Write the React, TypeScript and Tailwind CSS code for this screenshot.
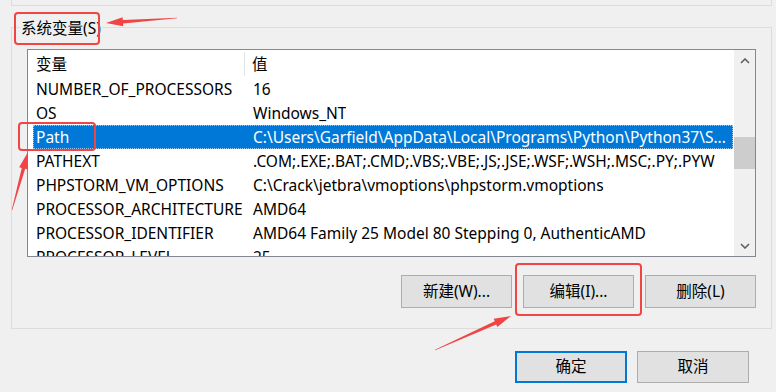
import React from "react";

const rows: [string, string][] = [
  ["NUMBER_OF_PROCESSORS", "16"],
  ["OS", "Windows_NT"],
  ["Path", "C:\\Users\\Garfield\\AppData\\Local\\Programs\\Python\\Python37\\S..."],
  ["PATHEXT", ".COM;.EXE;.BAT;.CMD;.VBS;.VBE;.JS;.JSE;.WSF;.WSH;.MSC;.PY;.PYW"],
  ["PHPSTORM_VM_OPTIONS", "C:\\Crack\\jetbra\\vmoptions\\phpstorm.vmoptions"],
  ["PROCESSOR_ARCHITECTURE", "AMD64"],
  ["PROCESSOR_IDENTIFIER", "AMD64 Family 25 Model 80 Stepping 0, AuthenticAMD"],
  ["PROCESSOR_LEVEL", "25"],
];

// tapered annotation arrow: thin tail, thick near the head
function arrowPoints(tx: number, ty: number, hx: number, hy: number) {
  const len = Math.hypot(hx - tx, hy - ty);
  const dx = (hx - tx) / len;
  const dy = (hy - ty) / len;
  const px = -dy;
  const py = dx;
  const headLen = 17;
  const headW = 4.5;
  const shaftW = 1.8;
  const tailW = 0.3;
  const bx = hx - dx * headLen;
  const by = hy - dy * headLen;
  const pts = [
    [tx + px * tailW, ty + py * tailW],
    [bx + px * shaftW, by + py * shaftW],
    [bx + px * headW, by + py * headW],
    [hx, hy],
    [bx - px * headW, by - py * headW],
    [bx - px * shaftW, by - py * shaftW],
    [tx - px * tailW, ty - py * tailW],
  ];
  return pts.map((p) => p.join(",")).join(" ");
}

function Chevron({ up }: { up?: boolean }) {
  return (
    <svg width="10" height="6" viewBox="0 0 10 6">
      <polyline
        points={up ? "1,5 5,1 9,5" : "1,1 5,5 9,1"}
        fill="none"
        stroke="#606060"
        strokeWidth="1.6"
      />
    </svg>
  );
}

export default function App() {
  return (
    <div className="relative w-[776px] h-[392px] overflow-hidden bg-[#f0f0f0] text-[15.5px] text-black font-['Noto_Sans','Noto_Sans_CJK_SC',sans-serif]">
      {/* bottom of the group box above */}
      <div className="ml-[11px] w-[761px] h-[6px] border-x border-b border-[#dcdcdc]" />

      {/* 系统变量 group */}
      <div className="relative mt-[21px] ml-[11px] w-[761px] h-[302px] border border-[#dcdcdc] pl-[15px] pt-[21px]">
        <span className="absolute left-[8px] -top-[10px] px-px bg-[#f0f0f0] leading-[20px]">系统变量(S)</span>

        <div className="flex w-[729px] h-[208px] border border-[#828790] bg-white">
          <div className="flex-1 overflow-hidden">
            <div className="flex h-[27px] items-center">
              <div className="w-[217px] h-[24px] pl-[8px] pt-[3px] flex items-center border-r border-[#e5e5e5]">变量</div>
              <div className="pl-[7px] pt-[3px]">值</div>
            </div>
            {rows.map(([name, value]) => {
              const sel = name === "Path";
              return (
                <div
                  key={name}
                  className={
                    sel
                      ? "flex h-[24px] items-center pt-[2px] ml-[5px] mr-px bg-[#0078d7] text-white outline-1 outline-dotted outline-[#9cc8f0] -outline-offset-1"
                      : "flex h-[24px] items-center pt-[2px] ml-[5px] mr-px"
                  }
                >
                  <div className="w-[212px] shrink-0 pl-[3px] whitespace-nowrap overflow-hidden">{name}</div>
                  <div className="pl-[8px] whitespace-nowrap overflow-hidden">{value}</div>
                </div>
              );
            })}
          </div>
          <div className="flex w-[21px] flex-col bg-[#f0f0f0]">
            <div className="flex h-[21px] items-center justify-center">
              <Chevron up />
            </div>
            <div className="flex-1">
              <div className="mt-[66px] h-[32px] bg-[#cdcdcd]" />
            </div>
            <div className="flex h-[21px] items-center justify-center">
              <Chevron />
            </div>
          </div>
        </div>

        <div className="mt-[18px] flex justify-end gap-[11px] pr-[15px]">
          {["新建(W)...", "编辑(I)...", "删除(L)"].map((b) => (
            <div
              key={b}
              className="flex w-[111px] h-[33px] items-center justify-center border border-[#adadad] bg-[#e1e1e1]"
            >
              {b}
            </div>
          ))}
        </div>
      </div>

      <div className="mt-[22px] flex justify-end gap-[10px] pr-[27px]">
        <div className="flex w-[112px] h-[32px] items-center justify-center border-2 border-[#0078d7] bg-[#e1e1e1]">确定</div>
        <div className="flex w-[112px] h-[32px] items-center justify-center border border-[#adadad] bg-[#e1e1e1]">取消</div>
      </div>

      {/* red annotations */}
      <svg className="pointer-events-none absolute left-0 top-0" width="776" height="392">
        <rect x="15" y="13" width="84" height="31" rx="3" fill="none" stroke="#f04545" strokeWidth="2" />
        <rect x="19" y="123" width="76" height="27" rx="3" fill="none" stroke="#f04545" strokeWidth="2" />
        <rect x="516" y="264" width="125" height="51" rx="3" fill="none" stroke="#f04545" strokeWidth="2" />
        <polygon points={arrowPoints(177, 18, 106, 23)} fill="#f04545" />
        <polygon points={arrowPoints(12, 210, 28, 152)} fill="#f04545" />
        <polygon points={arrowPoints(435, 350, 511, 316)} fill="#f04545" />
      </svg>
    </div>
  );
}
